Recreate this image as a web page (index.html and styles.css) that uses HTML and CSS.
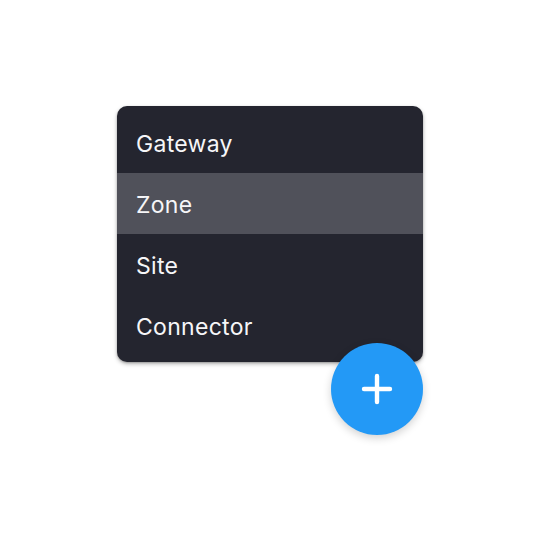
FILE: index.html
```html
<!DOCTYPE html>
<html>
<head>
<meta charset="utf-8">
<link rel="stylesheet" href="styles.css">
</head>
<body>
<div class="stage">
  <div class="anchor">
    <ul class="menu">
      <li class="item">Gateway</li>
      <li class="item active">Zone</li>
      <li class="item">Site</li>
      <li class="item">Connector</li>
    </ul>
    <button class="fab" aria-label="Add">
      <svg width="32" height="32" viewBox="0 0 32 32"><path d="M16 3v26M3 16h26" stroke="#fff" stroke-width="4.4" stroke-linecap="round" fill="none"/></svg>
    </button>
  </div>
</div>
</body>
</html>
```
FILE: styles.css
```css
html, body {
  margin: 0;
  padding: 0;
  background: #ffffff;
}
body {
  font-family: Inter, "Noto Sans", sans-serif;
}
.stage {
  width: 540px;
  height: 540px;
  padding: 106px 0 0 117px;
  box-sizing: border-box;
}
.anchor {
  position: relative;
  width: 306px;
}
.menu {
  list-style: none;
  margin: 0;
  padding: 6px 0;
  width: 306px;
  background: #24252f;
  border-radius: 10px;
  box-shadow: 0 2px 4px rgba(0,0,0,0.28), 0 1px 2px rgba(0,0,0,0.2);
}
.item {
  height: 61px;
  box-sizing: border-box;
  display: flex;
  align-items: center;
  padding: 3px 19px 0;
  color: #f6f6f8;
  font-size: 23px;
  font-weight: 400;
  letter-spacing: 0.3px;
}
.active {
  background: #50515a;
}
.fab {
  position: absolute;
  left: 214px;
  top: 237px;
  width: 92px;
  height: 92px;
  border-radius: 50%;
  border: none;
  padding: 0;
  background: #2399f6;
  display: flex;
  align-items: center;
  justify-content: center;
  box-shadow: 0 3px 8px rgba(0,0,0,0.18);
}
.fab svg { display: block; }
```
